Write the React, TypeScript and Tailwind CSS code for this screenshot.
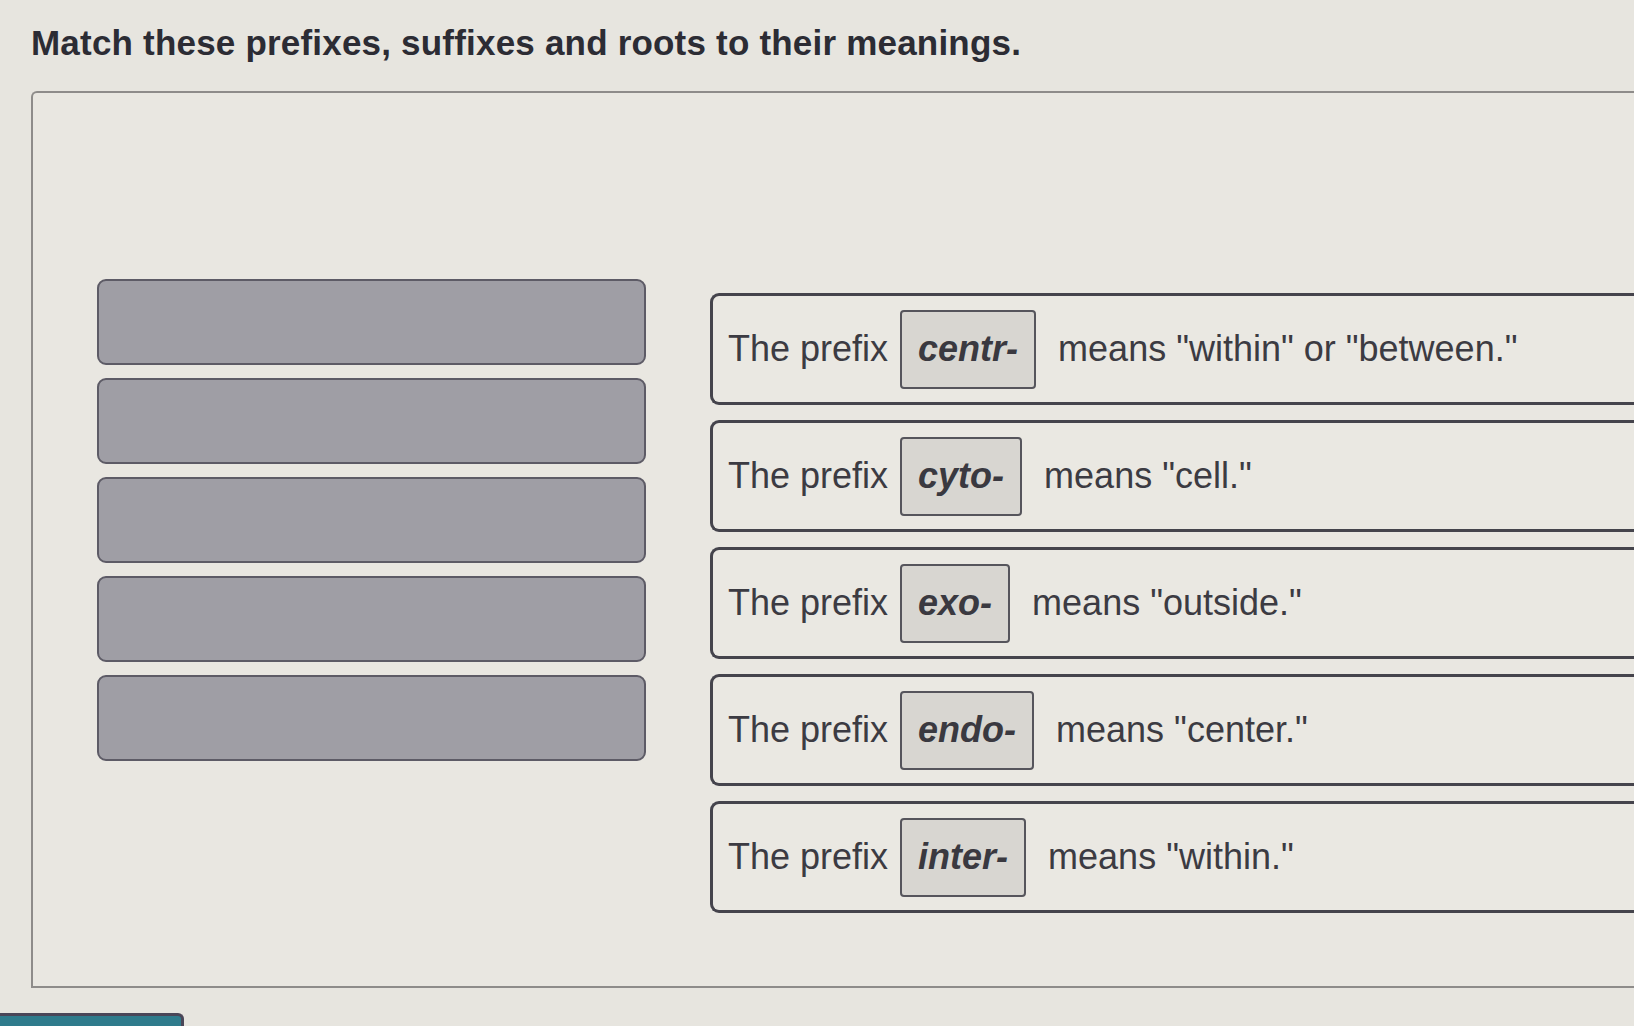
import React from 'react';

const prompts = [
  { prefix: 'centr-', meaning: 'means "within" or "between."' },
  { prefix: 'cyto-', meaning: 'means "cell."' },
  { prefix: 'exo-', meaning: 'means "outside."' },
  { prefix: 'endo-', meaning: 'means "center."' },
  { prefix: 'inter-', meaning: 'means "within."' },
];

const App: React.FC = () => {
  return (
    <div className="w-[1634px] h-[1026px] overflow-hidden bg-[#e7e5df] text-[#34343a] font-['Liberation_Sans',Arial,sans-serif] relative">
      <h1 className="pl-[31px] pt-[22px] text-[35px] leading-[42px] font-bold text-[#2c2c34] tracking-[0.2px]">
        Match these prefixes, suffixes and roots to their meanings.
      </h1>

      {/* Question panel */}
      <div className="ml-[31px] mt-[27px] h-[897px] w-[1640px] bg-[#e9e7e1] border-t-2 border-l-2 border-b-2 border-[#8e8c8a] rounded-tl-[6px] flex items-start">
        {/* Drag source slots */}
        <div className="ml-[64px] mt-[186px] w-[549px] flex flex-col gap-[13px]">
          {prompts.map((p) => (
            <div
              key={p.prefix}
              className="h-[86px] rounded-[9px] bg-[#9f9ea5] border-2 border-[#5d5b66]"
            />
          ))}
        </div>

        {/* Target sentences */}
        <div className="ml-[64px] mt-[200px] flex-1 flex flex-col gap-[15px]">
          {prompts.map((p) => (
            <div
              key={p.prefix}
              className="h-[112px] rounded-l-[9px] border-[3px] border-r-0 border-[#45444c] bg-[#eae8e2] flex items-center pl-[15px] text-[36px]"
            >
              <span className="text-[#3c3b42]">The prefix</span>
              <span className="ml-[12px] h-[79px] px-[16px] flex items-center rounded-[4px] border-2 border-[#56555c] bg-[#d8d6d1] font-bold italic text-[#3a3940]">
                {p.prefix}
              </span>
              <span className="ml-[22px] text-[#3c3b42]">{p.meaning}</span>
            </div>
          ))}
        </div>
      </div>

      {/* Bottom button edge */}
      <div className="absolute left-0 top-[1013px] w-[184px] h-[20px] bg-[#2f7b8c] border-t-[3px] border-r-[3px] border-[#4a4658] rounded-tr-[6px]" />
    </div>
  );
};

export default App;
